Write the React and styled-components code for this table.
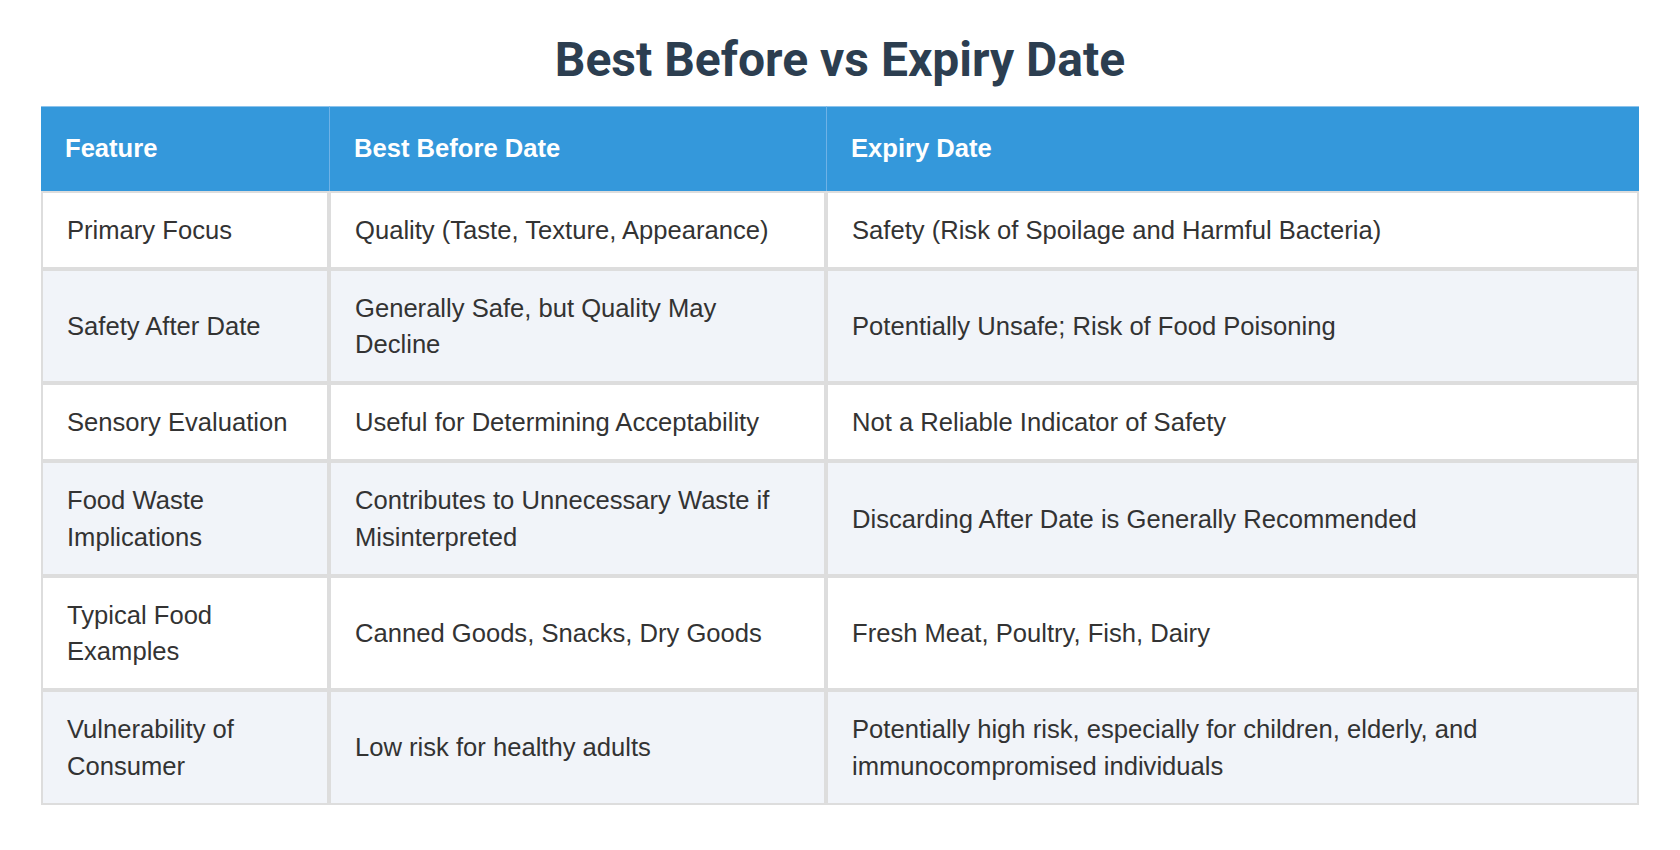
import styled, { createGlobalStyle } from "styled-components";

const GlobalStyle = createGlobalStyle`
  body {
    margin: 0;
    background: #ffffff;
    font-family: "Liberation Sans", Arial, sans-serif;
  }
`;

const rows = [
  ["Primary Focus", "Quality (Taste, Texture, Appearance)", "Safety (Risk of Spoilage and Harmful Bacteria)"],
  ["Safety After Date", "Generally Safe, but Quality May Decline", "Potentially Unsafe; Risk of Food Poisoning"],
  ["Sensory Evaluation", "Useful for Determining Acceptability", "Not a Reliable Indicator of Safety"],
  ["Food Waste Implications", "Contributes to Unnecessary Waste if Misinterpreted", "Discarding After Date is Generally Recommended"],
  ["Typical Food Examples", "Canned Goods, Snacks, Dry Goods", "Fresh Meat, Poultry, Fish, Dairy"],
  ["Vulnerability of Consumer", "Low risk for healthy adults", "Potentially high risk, especially for children, elderly, and immunocompromised individuals"],
];

const App = () => {
  return (
    <Page>
      <GlobalStyle />
      <Title>Best Before vs Expiry Date</Title>
      <Table>
        <colgroup>
          <col style={{ width: 288 }} />
          <col style={{ width: 497 }} />
          <col />
        </colgroup>
        <thead>
          <tr>
            <Th>Feature</Th>
            <Th>Best Before Date</Th>
            <Th>Expiry Date</Th>
          </tr>
        </thead>
        <tbody>
          {rows.map((row, i) => (
            <Row key={row[0]} $striped={i % 2 === 1}>
              {row.map((cell) => (
                <Td key={cell}>{cell}</Td>
              ))}
            </Row>
          ))}
        </tbody>
      </Table>
    </Page>
  );
};

const Page = styled.div`
  width: 1598px;
  margin: 0 auto;
  padding-top: 32px;
`;

const Title = styled.h1`
  margin: 0 0 18px;
  text-align: center;
  font-family: Roboto, "Liberation Sans", sans-serif;
  font-weight: 700;
  font-size: 48px;
  line-height: 56px;
  color: #2c3e50;
`;

const Table = styled.table`
  width: 100%;
  table-layout: fixed;
  border-collapse: separate;
  border-spacing: 0;
`;

const Th = styled.th`
  background: #3498db;
  color: #ffffff;
  text-align: left;
  font-weight: 700;
  font-size: 25.6px;
  line-height: 1.4;
  padding: 24px 24px;
  border-top: 1px solid #8cc3ec;
  border-left: 1px solid #6fb2e6;
  &:first-child {
    border-left: none;
  }
`;

const Row = styled.tr`
  background: ${(p) => (p.$striped ? "#f1f4f9" : "#ffffff")};
`;

const Td = styled.td`
  border: 2px solid #dddddd;
  padding: 18.9px 24px;
  font-size: 25.6px;
  line-height: 1.42;
  color: #333333;
  vertical-align: middle;
`;

export default App;
